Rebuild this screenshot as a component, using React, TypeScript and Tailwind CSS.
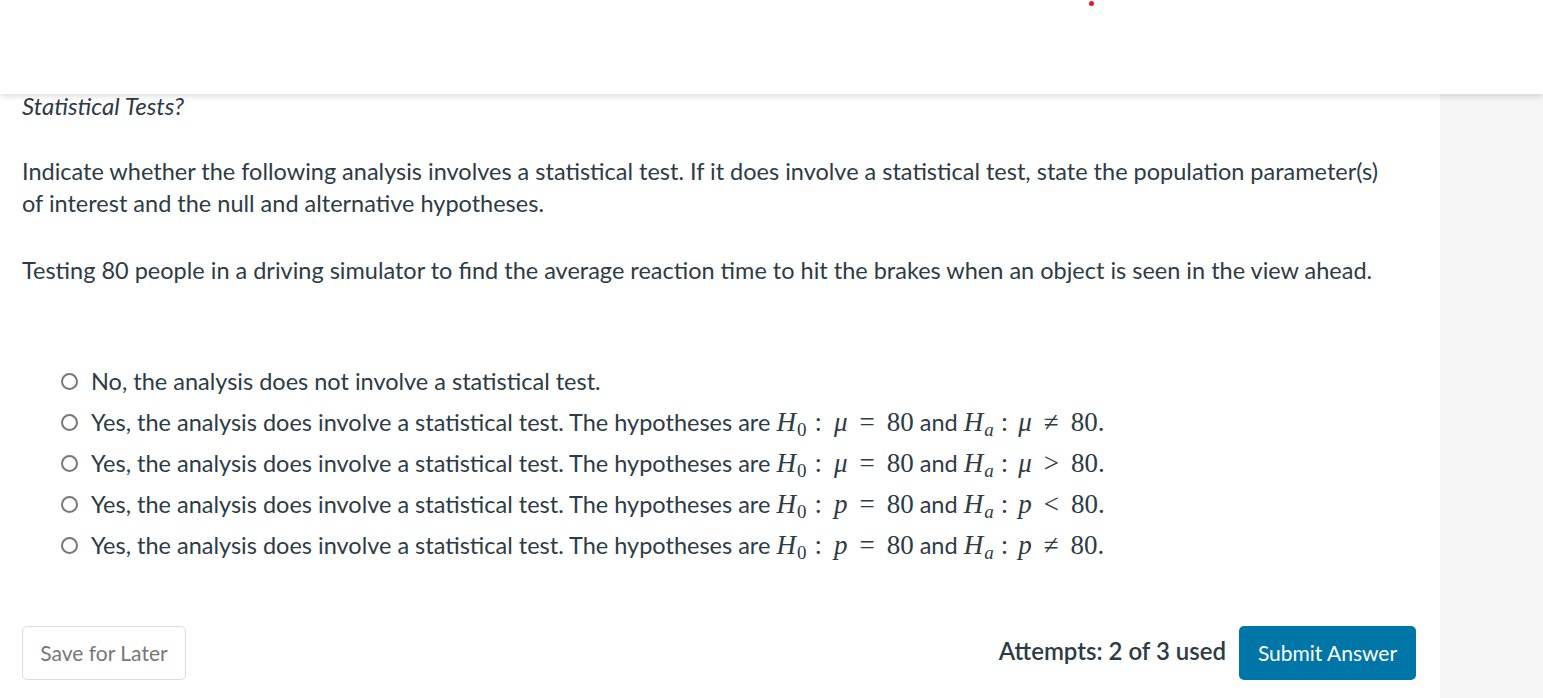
import React from "react";

const serif = { fontFamily: '"Liberation Serif", "DejaVu Serif", serif' };

function H({ sub }: { sub: string }) {
  return (
    <span className="italic">
      H
      <span className={`text-[19px] ${sub === "a" ? "italic" : "not-italic"} relative top-[5px] ml-[1px]`}>{sub}</span>
    </span>
  );
}

function Rel({ v, op }: { v: string; op: string }) {
  return (
    <span className="text-[27px]" style={serif}>
      <span className="italic">{v}</span>
      <span className="mx-[12px]">{op}</span>
      <span>80</span>
    </span>
  );
}

function Option({ children }: { children: React.ReactNode }) {
  return (
    <div className="flex items-center h-[41px]">
      <span className="w-[17px] h-[17px] rounded-full border-2 border-[#777777] mr-[12px] shrink-0 relative -left-[1px]" />
      <span className="whitespace-nowrap">{children}</span>
    </div>
  );
}

function Hyp({ v, op }: { v: string; op: string }) {
  return (
    <>
      Yes, the analysis does involve a statistical test. The hypotheses are{" "}
      <span className="text-[27px]" style={serif}>
        <H sub="0" />
        <span className="ml-[8px] mr-[12px]">:</span>
      </span>
      <Rel v={v} op="=" />
      {" "}and{" "}
      <span className="text-[27px]" style={serif}>
        <H sub="a" />
        <span className="ml-[7px] mr-[10px]">:</span>
      </span>
      <Rel v={v} op={op} />
      <span className="text-[27px]" style={serif}>.</span>
    </>
  );
}

export default function App() {
  return (
    <div
      className="w-[1543px] h-[698px] overflow-hidden bg-white text-[#2d3b45] relative"
      style={{ fontFamily: 'Lato, "Noto Sans", sans-serif' }}
    >
      <div className="absolute left-0 right-0 top-0 h-[94px] bg-white z-10 shadow-[0_2px_6px_rgba(0,0,0,0.15)]">
        <div className="absolute left-[1089px] top-[1px] w-[5px] h-[5px] rounded-full bg-[#e21d1d]" />
      </div>
      <div className="flex h-full pt-[94px]">
        <div className="w-[1440px] pl-[22px] pr-[24px] flex flex-col">
          <div className="italic text-[24px] leading-[24px]">Statistical Tests?</div>
          <p className="mt-[37px] mr-[30px] text-[23.5px] leading-[32px]">
            Indicate whether the following analysis involves a statistical test. If it does involve a statistical test, state the population parameter(s) of interest and the null and alternative hypotheses.
          </p>
          <p className="mt-[35px] text-[23.5px] leading-[32px]">
            Testing 80 people in a driving simulator to find the average reaction time to hit the brakes when an object is seen in the view ahead.
          </p>
          <div className="mt-[75px] pl-[40px] text-[23.5px] flex flex-col">
            <Option>No, the analysis does not involve a statistical test.</Option>
            <Option><Hyp v="μ" op="≠" /></Option>
            <Option><Hyp v="μ" op=">" /></Option>
            <Option><Hyp v="p" op="<" /></Option>
            <Option><Hyp v="p" op="≠" /></Option>
          </div>
          <div className="mt-[60px] flex items-center justify-between">
            <button className="h-[54px] w-[164px] border border-[#dcdcdc] rounded-[5px] text-[21px] text-[#777777] bg-white">
              Save for Later
            </button>
            <div className="flex items-center gap-[13px]">
              <span className="text-[24px] font-semibold text-[#2d3b45] relative -top-[2px]">Attempts: 2 of 3 used</span>
              <button className="h-[54px] w-[177px] rounded-[5px] bg-[#0076a8] text-white text-[21px]">
                Submit Answer
              </button>
            </div>
          </div>
        </div>
        <div className="flex-1 bg-[#f5f5f5]" />
      </div>
    </div>
  );
}
